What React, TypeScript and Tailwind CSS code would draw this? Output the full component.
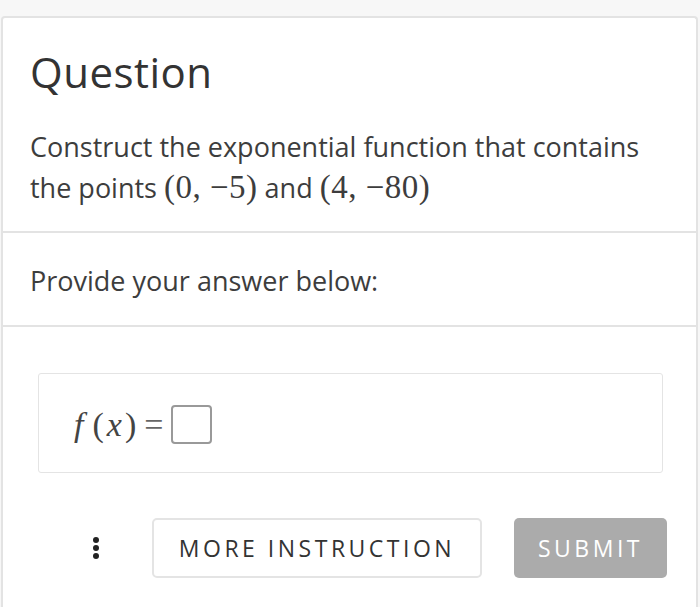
import React from "react";

const sans = { fontFamily: '"Open Sans", "Noto Sans", sans-serif' };
const serif = { fontFamily: '"Liberation Serif", "Times New Roman", serif' };

export default function App() {
  return (
    <div className="w-[700px] h-[607px] overflow-hidden bg-[#f7f7f7] pt-4 pl-px pr-[2px]" style={sans}>
      <div className="h-full bg-white border-2 border-b-0 border-[#e3e3e3] rounded-t-[4px] flex flex-col text-[#3a3a3a]">
        <div className="h-[215px] shrink-0 border-b-2 border-[#e3e3e3] pl-[27px] pr-4 pt-[27px]">
          <h1 className="text-[42px] leading-[54px] tracking-[0.5px] text-[#333]">Question</h1>
          <p className="mt-[28px] text-[27px] leading-[40px] text-[#3d3d3d]">
            Construct the exponential function that contains
            <br />
            the points{" "}
            <span className="text-[33px] tracking-[0.5px]" style={serif}>(0, −5)</span> and{" "}
            <span className="text-[33px] tracking-[0.5px]" style={serif}>(4, −80)</span>
          </p>
        </div>
        <div className="h-[94px] shrink-0 border-b-2 border-[#e3e3e3] pl-[27px] flex items-center pt-[4px]">
          <p className="text-[27px] text-[#3d3d3d]">Provide your answer below:</p>
        </div>
        <div className="flex-1 pl-[35px] pt-[46px]">
          <div className="w-[625px] h-[100px] border border-[#e4e4e4] rounded-[3px] flex items-center pl-[35px] pt-[2px]">
            <span className="text-[34px] text-[#444] flex items-center" style={serif}>
              <i className="mr-[9px]">f</i>
              <span>(</span>
              <i className="mx-[3px]">x</i>
              <span>)</span>
              <span className="ml-[8px] mr-[8px] text-[#666]">=</span>
              <span className="inline-block w-[41px] h-[39px] border-2 border-[#999] rounded-[4px]"></span>
            </span>
          </div>
          <div className="mt-[45px] flex items-center">
            <div className="w-[114px] shrink-0 flex justify-center pl-[2px]">
              <div className="flex flex-col gap-[2px]">
                <span className="w-[6px] h-[6px] rounded-full bg-[#222]"></span>
                <span className="w-[6px] h-[6px] rounded-full bg-[#222]"></span>
                <span className="w-[6px] h-[6px] rounded-full bg-[#222]"></span>
              </div>
            </div>
            <button className="shrink-0 w-[330px] h-[60px] border-2 border-[#e4e4e4] rounded-[5px] bg-white text-[23px] tracking-[3.5px] text-[#333]">
              MORE INSTRUCTION
            </button>
            <button className="shrink-0 ml-[32px] w-[153px] h-[60px] rounded-[5px] bg-[#ababab] text-[23px] tracking-[3.5px] text-white">
              SUBMIT
            </button>
          </div>
        </div>
      </div>
    </div>
  );
}
